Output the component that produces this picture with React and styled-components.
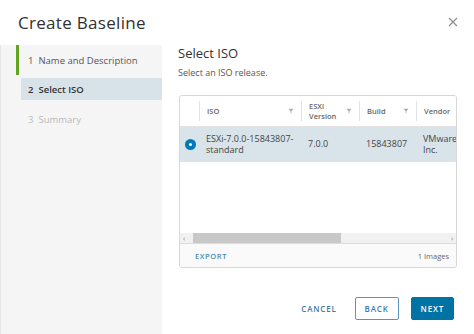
import React from 'react';
import styled, { createGlobalStyle } from 'styled-components';

const GlobalStyle = createGlobalStyle`
  html, body { margin: 0; padding: 0; background: #fff; }
  body { font-family: 'Open Sans', 'Liberation Sans', sans-serif; color: #565656; }
  * { box-sizing: border-box; }
`;

const Modal = styled.div`
  width: 474px;
  height: 334px;
  display: flex;
  flex-direction: column;
  overflow: hidden;
  background: #fff;
`;

const Header = styled.div`
  height: 45px;
  display: flex;
  align-items: center;
  justify-content: space-between;
  padding: 0 16px 1px 18px;
`;

const Title = styled.h1`
  margin: 0;
  font-size: 17px;
  font-weight: 400;
  color: #313131;
  letter-spacing: 0.3px;
`;

const Close = styled.button`
  border: 0;
  background: none;
  padding: 0;
  width: 10px;
  height: 10px;
  display: flex;
  svg { display: block; }
`;

const Body = styled.div`
  flex: 1;
  display: flex;
  min-height: 0;
`;

const Nav = styled.nav`
  width: 162px;
  flex-shrink: 0;
  background: #f5f5f5;
  border-left: 1px solid #e6e6e6;
  padding: 0 0 0 15px;
  display: flex;
  flex-direction: column;
  gap: 3px;
`;

const Step = styled.div`
  height: ${p => (p.$done ? '30px' : '22px')};
  margin-top: ${p => (p.$disabled ? '5px' : '0')};
  display: flex;
  align-items: center;
  white-space: nowrap;
  padding-left: ${p => (p.$done ? '9px' : '7px')};
  margin-left: ${p => (p.$done ? '0' : '5px')};
  border-left: ${p => (p.$done ? '3px solid #62a420' : 'none')};
  background: ${p => (p.$active ? '#d8e3e9' : 'transparent')};
  font-size: 9.5px;
  font-weight: ${p => (p.$active ? 600 : 400)};
  color: ${p => (p.$disabled ? '#b9b9b9' : p.$active ? '#333' : '#565656')};
  span { margin-right: 5px; }
`;

const Content = styled.div`
  flex: 1;
  min-width: 0;
  display: flex;
  flex-direction: column;
  padding: 0 17px 0 16px;
`;

const Heading = styled.h2`
  margin: 0;
  font-size: 13px;
  font-weight: 400;
  color: #313131;
  line-height: 16px;
`;

const Hint = styled.p`
  margin: 6px 0 0;
  font-size: 9px;
  line-height: 12px;
  color: #565656;
`;

const Grid = styled.div`
  margin: 16px 0 0 1px;
  height: 173px;
  border: 1px solid #d7d7d7;
  border-radius: 3px;
  display: flex;
  flex-direction: column;
  overflow: hidden;
`;

const Row = styled.div`
  display: grid;
  grid-template-columns: 19px 102px 58px 57px 60px;
  height: ${p => (p.$head ? '31px' : '35px')};
  background: ${p => (p.$selected ? '#d9e4ea' : '#fff')};
  border-bottom: 1px solid #e3e3e3;
  flex-shrink: 0;
`;

const Cell = styled.div`
  display: flex;
  align-items: center;
  justify-content: space-between;
  overflow: hidden;
  padding: 0 ${p => (p.$head ? '7px' : '2px')} 0 7px;
  font-size: ${p => (p.$head ? '7.5px' : '9px')};
  line-height: ${p => (p.$head ? '10px' : '11.5px')};
  font-weight: ${p => (p.$head ? 600 : 400)};
  color: ${p => (p.$head ? '#666' : '#444')};
  white-space: nowrap;
  border-left: ${p => (p.$sep ? '1px solid #e3e3e3' : 'none')};
  ${p => p.$head && 'margin: 5px 0;'}
`;

const Filter = () => (
  <svg width="6" height="6" viewBox="0 0 6 6">
    <path d="M0.5 0.8h5L3.4 3.2v2.4L2.6 5.2V3.2z" fill="#aaa" />
  </svg>
);

const Radio = styled.span`
  width: 11px;
  height: 11px;
  flex-shrink: 0;
  border-radius: 50%;
  background: #0079b8;
  display: flex;
  align-items: center;
  justify-content: center;
  margin-left: -2px;
  &::after {
    content: '';
    width: 3px;
    height: 3px;
    border-radius: 50%;
    background: #fff;
  }
`;

const Empty = styled.div`
  flex: 1;
`;

const Scroll = styled.div`
  height: 10px;
  display: flex;
  align-items: center;
  background: #f1f1f1;
  font-size: 7px;
  color: #777;
  padding: 0 3px;
`;

const Thumb = styled.div`
  width: 148px;
  height: 10px;
  background: #c8c8c8;
  margin: 0 auto 0 8px;
`;

const GridFooter = styled.div`
  height: 24px;
  flex-shrink: 0;
  border-top: 1px solid #dcdcdc;
  background: #fafafa;
  display: flex;
  align-items: center;
  justify-content: space-between;
  padding: 0 7px 0 15px;
`;

const LinkBtn = styled.span`
  font-size: 7.5px;
  font-weight: 600;
  letter-spacing: 0.6px;
  color: #4d8ab0;
`;

const Count = styled.span`
  font-size: 7.5px;
  color: #666;
`;

const Actions = styled.div`
  margin-top: auto;
  height: 58px;
  display: flex;
  align-items: flex-start;
  justify-content: flex-end;
  padding-top: 21px;
  gap: 12px;
  margin-right: 3px;
`;

const Button = styled.button`
  height: 23px;
  min-width: 41px;
  padding: 0 ${p => (p.$variant === 'link' ? '5px' : '9px')};
  border-radius: 2px;
  border: 1px solid ${p => (p.$variant === 'outline' ? '#5d93b9' : p.$variant === 'primary' ? '#0072a3' : 'transparent')};
  background: ${p => (p.$variant === 'primary' ? '#0072a3' : 'transparent')};
  color: ${p => (p.$variant === 'primary' ? '#fff' : '#3f7ba6')};
  font-family: inherit;
  font-size: 8px;
  font-weight: 600;
  letter-spacing: 0.8px;
`;

export default function App() {
  return (
    <>
      <GlobalStyle />
      <Modal>
        <Header>
          <Title>Create Baseline</Title>
          <Close aria-label="Close">
            <svg width="10" height="10" viewBox="0 0 10 10">
              <path d="M1 1L9 9M9 1L1 9" stroke="#8c8c8c" strokeWidth="1.1" />
            </svg>
          </Close>
        </Header>
        <Body>
          <Nav>
            <Step $done><span>1</span>Name and Description</Step>
            <Step $active><span>2</span>Select ISO</Step>
            <Step $disabled><span>3</span>Summary</Step>
          </Nav>
          <Content>
            <Heading>Select ISO</Heading>
            <Hint>Select an ISO release.</Hint>
            <Grid>
              <Row $head>
                <Cell $head />
                <Cell $head $sep>ISO<Filter /></Cell>
                <Cell $head $sep>ESXi<br />Version<Filter /></Cell>
                <Cell $head $sep>Build<Filter /></Cell>
                <Cell $head $sep>Vendor</Cell>
              </Row>
              <Row $selected>
                <Cell><Radio /></Cell>
                <Cell>ESXi-7.0.0-15843807-<br />standard</Cell>
                <Cell>7.0.0</Cell>
                <Cell>15843807</Cell>
                <Cell>VMware<br />Inc.</Cell>
              </Row>
              <Empty />
              <Scroll>‹<Thumb />›</Scroll>
              <GridFooter>
                <LinkBtn>EXPORT</LinkBtn>
                <Count>1 Images</Count>
              </GridFooter>
            </Grid>
            <Actions>
              <Button $variant="link">CANCEL</Button>
              <Button $variant="outline">BACK</Button>
              <Button $variant="primary">NEXT</Button>
            </Actions>
          </Content>
        </Body>
      </Modal>
    </>
  );
}
